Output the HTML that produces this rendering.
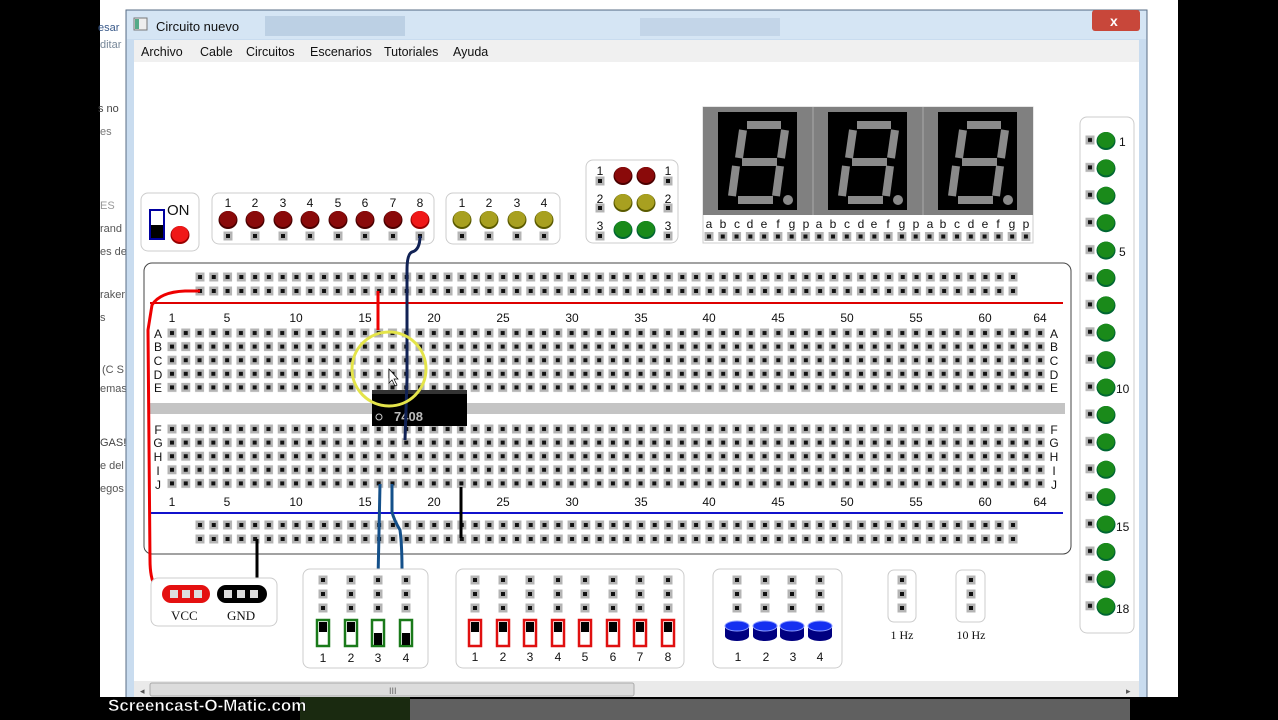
<!DOCTYPE html>
<html><head><meta charset="utf-8"><style>
html,body{margin:0;padding:0;background:#000;}
svg{display:block;font-family:"Liberation Sans",sans-serif;}
</style></head><body>
<svg width="1278" height="720" viewBox="0 0 1278 720" xmlns="http://www.w3.org/2000/svg">
<defs>
<pattern id="hp" width="13.78" height="13.6" patternUnits="userSpaceOnUse"><rect x="2.4" y="2.3" width="9" height="9" fill="#b4b4b4"/><rect x="4.9" y="4.8" width="4" height="4" fill="#111"/></pattern>
<pattern id="hr" width="13.78" height="14" patternUnits="userSpaceOnUse"><rect x="2.4" y="2.5" width="9" height="9" fill="#b4b4b4"/><rect x="4.9" y="5" width="4" height="4" fill="#111"/></pattern>
<pattern id="hl" width="13.78" height="27.4" patternUnits="userSpaceOnUse"><rect x="2.4" y="2.2" width="9" height="9" fill="#b4b4b4"/><rect x="4.9" y="4.7" width="4" height="4" fill="#111"/></pattern>
<g id="o"><rect x="-4.5" y="-4.5" width="9" height="9" fill="#b4b4b4"/><rect x="-2" y="-2" width="4" height="4" fill="#111"/></g>
<g id="lr"><ellipse cx="0" cy="1" rx="9.5" ry="9" fill="#4a0000"/><ellipse cx="0" cy="0" rx="8.5" ry="8" fill="#8a0a0a"/></g>
<g id="lo"><ellipse cx="0" cy="1" rx="9.5" ry="9" fill="#900"/><ellipse cx="0" cy="0" rx="8.5" ry="8" fill="#f01818"/></g>
<g id="ly"><ellipse cx="0" cy="1" rx="9.5" ry="9" fill="#5a5a00"/><ellipse cx="0" cy="0" rx="8.5" ry="8" fill="#a8a020"/></g>
<g id="lg"><ellipse cx="0" cy="1" rx="9.5" ry="9" fill="#063"/><ellipse cx="0" cy="0" rx="8.5" ry="8" fill="#1a8a1a"/></g>
<g id="dg"><rect width="79" height="98" fill="#000"/><g stroke="#8a8a8a" stroke-width="8"><line x1="29" y1="13" x2="63" y2="13"/><line x1="67" y1="18" x2="63" y2="46"/><line x1="62" y1="54" x2="58" y2="84"/><line x1="20" y1="88" x2="55" y2="88"/><line x1="18" y1="54" x2="14" y2="84"/><line x1="25" y1="18" x2="21" y2="46"/><line x1="24" y1="50" x2="59" y2="50"/></g><circle cx="70" cy="88" r="5" fill="#8a8a8a"/></g>
<g id="bb"><ellipse cx="0" cy="8" rx="12" ry="5" fill="#000080"/><rect x="-12" y="-2" width="24" height="10" fill="#000080"/><ellipse cx="0" cy="-2" rx="12" ry="5" fill="#1530f0" stroke="#8fa0ff" stroke-width="1"/></g>
</defs>
<rect x="0" y="0" width="100" height="720" fill="#000"/>
<rect x="100" y="0" width="1078" height="697" fill="#fff"/>
<rect x="1178" y="0" width="100" height="720" fill="#000"/>
<g font-size="11" fill="#3a5a8a"><text x="98" y="31">esar</text><text x="100" y="48" fill="#789">ditar</text><text x="98" y="112" fill="#444">s no</text><text x="100" y="135" fill="#777">es</text><text x="100" y="209" fill="#999">ES</text><text x="100" y="232" fill="#555">rand</text><text x="100" y="255" fill="#555">es de</text><text x="100" y="298" fill="#555">raker</text><text x="100" y="321" fill="#555">s</text><text x="102" y="373" fill="#555">(C S</text><text x="100" y="392" fill="#555">emas</text><text x="100" y="446" fill="#444">GAS!</text><text x="100" y="469" fill="#555">e del</text><text x="100" y="492" fill="#555">egos</text></g>
<rect x="126" y="10" width="1021" height="695" fill="#c9dcef" stroke="#5a6e86"/>
<rect x="127" y="11" width="1019" height="28" fill="#d5e5f4"/>
<rect x="265" y="16" width="140" height="20" fill="#bcd0e4"/>
<rect x="640" y="18" width="140" height="18" fill="#c3d5e8"/>
<rect x="134" y="18" width="13" height="12" fill="#eee" stroke="#777"/><rect x="135" y="19" width="4" height="10" fill="#5a8"/>
<text x="156" y="31" font-size="13" fill="#111">Circuito nuevo</text>
<rect x="1092" y="10" width="48" height="21" rx="3" fill="#c8473a"/><text x="1110" y="26" font-size="14" font-weight="bold" fill="#fff">x</text>
<rect x="134" y="40" width="1005" height="22" fill="#f0f0f0"/>
<g font-size="12.5" fill="#111"><text x="141" y="56">Archivo</text><text x="200" y="56">Cable</text><text x="246" y="56">Circuitos</text><text x="310" y="56">Escenarios</text><text x="384" y="56">Tutoriales</text><text x="453" y="56">Ayuda</text></g>
<rect x="134" y="62" width="1005" height="619" fill="#fff"/>
<rect x="134" y="681" width="1005" height="17" fill="#eaeaea"/>
<rect x="150" y="683" width="484" height="13" rx="2" fill="#dcdcdc" stroke="#aaa"/>
<text x="389" y="694" font-size="9" fill="#666">III</text>
<text x="140" y="694" font-size="9" fill="#555">◂</text><text x="1126" y="694" font-size="9" fill="#555">▸</text>
<rect x="0" y="697" width="1278" height="23" fill="#000"/>
<rect x="300" y="697" width="110" height="23" fill="#1a2a10"/>
<rect x="410" y="699" width="720" height="21" fill="#606060"/>
<text x="108" y="711" font-size="17" font-weight="bold" fill="#fff" stroke="#000" stroke-width="0.5">Screencast-O-Matic.com</text>

<rect x="141" y="193" width="58" height="58" rx="7" fill="#fff" stroke="#ccc"/>
<rect x="150" y="210" width="14" height="29" fill="#fff" stroke="#0000a0" stroke-width="2"/><rect x="151" y="225" width="12" height="13" fill="#000"/>
<text x="167" y="215" font-size="15" fill="#111">ON</text>
<use href="#lo" x="180" y="234"/>
<rect x="212" y="193" width="222" height="51" rx="7" fill="#fff" stroke="#ccc"/>
<g font-size="12" fill="#111" text-anchor="middle"><text x="228" y="207">1</text><text x="255" y="207">2</text><text x="283" y="207">3</text><text x="310" y="207">4</text><text x="338" y="207">5</text><text x="365" y="207">6</text><text x="393" y="207">7</text><text x="420" y="207">8</text></g>
<use href="#lr" x="228" y="219"/><use href="#lr" x="255" y="219"/><use href="#lr" x="283" y="219"/><use href="#lr" x="310" y="219"/><use href="#lr" x="338" y="219"/><use href="#lr" x="365" y="219"/><use href="#lr" x="393" y="219"/><use href="#lo" x="420" y="219"/>
<use href="#o" x="228" y="236"/><use href="#o" x="255" y="236"/><use href="#o" x="283" y="236"/><use href="#o" x="310" y="236"/><use href="#o" x="338" y="236"/><use href="#o" x="365" y="236"/><use href="#o" x="393" y="236"/><use href="#o" x="420" y="236"/>
<rect x="446" y="193" width="114" height="51" rx="7" fill="#fff" stroke="#ccc"/>
<g font-size="12" fill="#111" text-anchor="middle"><text x="462" y="207">1</text><text x="489" y="207">2</text><text x="517" y="207">3</text><text x="544" y="207">4</text></g>
<use href="#ly" x="462" y="219"/><use href="#ly" x="489" y="219"/><use href="#ly" x="517" y="219"/><use href="#ly" x="544" y="219"/>
<use href="#o" x="462" y="236"/><use href="#o" x="489" y="236"/><use href="#o" x="517" y="236"/><use href="#o" x="544" y="236"/>
<rect x="586" y="160" width="92" height="83" rx="7" fill="#fff" stroke="#ccc"/>
<g font-size="12" fill="#111" text-anchor="middle"><text x="600" y="175">1</text><text x="668" y="175">1</text><text x="600" y="203">2</text><text x="668" y="203">2</text><text x="600" y="230">3</text><text x="668" y="230">3</text></g>
<use href="#o" x="600" y="181"/><use href="#o" x="668" y="181"/><use href="#o" x="600" y="208"/><use href="#o" x="668" y="208"/><use href="#o" x="600" y="236"/><use href="#o" x="668" y="236"/>
<use href="#lr" x="623" y="175"/><use href="#lr" x="646" y="175"/><use href="#ly" x="623" y="202"/><use href="#ly" x="646" y="202"/><use href="#lg" x="623" y="229"/><use href="#lg" x="646" y="229"/>
<rect x="703" y="107" width="330" height="136" fill="#fff" stroke="#ccc"/>
<rect x="703" y="107" width="330" height="108" fill="#808080"/>
<line x1="813" y1="107" x2="813" y2="215" stroke="#aaa"/><line x1="923" y1="107" x2="923" y2="215" stroke="#aaa"/>
<use href="#dg" x="718" y="112"/><use href="#dg" x="828" y="112"/><use href="#dg" x="938" y="112"/>
<g font-size="12" fill="#111" text-anchor="middle">
<text x="709" y="228">a</text><text x="723" y="228">b</text><text x="737" y="228">c</text><text x="750" y="228">d</text><text x="764" y="228">e</text><text x="778" y="228">f</text><text x="792" y="228">g</text><text x="806" y="228">p</text>
<text x="819" y="228">a</text><text x="833" y="228">b</text><text x="847" y="228">c</text><text x="861" y="228">d</text><text x="874" y="228">e</text><text x="888" y="228">f</text><text x="902" y="228">g</text><text x="916" y="228">p</text>
<text x="930" y="228">a</text><text x="943" y="228">b</text><text x="957" y="228">c</text><text x="971" y="228">d</text><text x="985" y="228">e</text><text x="998" y="228">f</text><text x="1012" y="228">g</text><text x="1026" y="228">p</text></g>
<g transform="translate(702.1,229.5)"><rect width="330.7" height="14" fill="url(#hr)"/></g>
<rect x="1080" y="117" width="54" height="516" rx="7" fill="#fff" stroke="#ccc"/>
<g transform="translate(1083.1,133.3)"><rect width="13.78" height="493" fill="url(#hl)"/></g>
<g>
<use href="#lg" x="1106" y="140"/><use href="#lg" x="1106" y="167.4"/><use href="#lg" x="1106" y="194.8"/><use href="#lg" x="1106" y="222.2"/><use href="#lg" x="1106" y="249.6"/><use href="#lg" x="1106" y="277"/><use href="#lg" x="1106" y="304.4"/><use href="#lg" x="1106" y="331.8"/><use href="#lg" x="1106" y="359.2"/><use href="#lg" x="1106" y="386.6"/><use href="#lg" x="1106" y="414"/><use href="#lg" x="1106" y="441.4"/><use href="#lg" x="1106" y="468.8"/><use href="#lg" x="1106" y="496.2"/><use href="#lg" x="1106" y="523.6"/><use href="#lg" x="1106" y="551"/><use href="#lg" x="1106" y="578.4"/><use href="#lg" x="1106" y="605.8"/></g>
<g font-size="12" fill="#111"><text x="1119" y="146">1</text><text x="1119" y="256">5</text><text x="1116" y="393">10</text><text x="1116" y="531">15</text><text x="1116" y="613">18</text></g>

<rect x="144" y="263" width="927" height="291" rx="8" fill="#fff" stroke="#444"/>
<line x1="150" y1="303" x2="1063" y2="303" stroke="#d00" stroke-width="2"/>
<line x1="150" y1="513" x2="1063" y2="513" stroke="#11c" stroke-width="2"/>
<rect x="150" y="403" width="915" height="11" fill="#c4c4c4"/>
<g transform="translate(193.1,270)"><rect width="826.8" height="28" fill="url(#hr)"/></g>
<g transform="translate(193.1,518)"><rect width="826.8" height="28" fill="url(#hr)"/></g>
<g transform="translate(165.1,326.2)"><rect width="882" height="68" fill="url(#hp)"/></g>
<g transform="translate(165.1,422.2)"><rect width="882" height="68" fill="url(#hp)"/></g>
<g font-size="12" fill="#111" text-anchor="middle">
<text x="172" y="322">1</text><text x="227" y="322">5</text><text x="296" y="322">10</text><text x="365" y="322">15</text><text x="434" y="322">20</text><text x="503" y="322">25</text><text x="572" y="322">30</text><text x="641" y="322">35</text><text x="709" y="322">40</text><text x="778" y="322">45</text><text x="847" y="322">50</text><text x="916" y="322">55</text><text x="985" y="322">60</text><text x="1040" y="322">64</text>
<text x="172" y="506">1</text><text x="227" y="506">5</text><text x="296" y="506">10</text><text x="365" y="506">15</text><text x="434" y="506">20</text><text x="503" y="506">25</text><text x="572" y="506">30</text><text x="641" y="506">35</text><text x="709" y="506">40</text><text x="778" y="506">45</text><text x="847" y="506">50</text><text x="916" y="506">55</text><text x="985" y="506">60</text><text x="1040" y="506">64</text>
<text x="158" y="338">A</text><text x="158" y="351">B</text><text x="158" y="365">C</text><text x="158" y="379">D</text><text x="158" y="392">E</text>
<text x="1054" y="338">A</text><text x="1054" y="351">B</text><text x="1054" y="365">C</text><text x="1054" y="379">D</text><text x="1054" y="392">E</text>
<text x="158" y="434">F</text><text x="158" y="447">G</text><text x="158" y="461">H</text><text x="158" y="475">I</text><text x="158" y="489">J</text>
<text x="1054" y="434">F</text><text x="1054" y="447">G</text><text x="1054" y="461">H</text><text x="1054" y="475">I</text><text x="1054" y="489">J</text></g>
<rect x="372" y="390" width="95" height="36" fill="#000"/>
<rect x="372" y="390" width="95" height="4" fill="#333"/>
<circle cx="379" cy="417" r="3" fill="none" stroke="#ccc"/>
<text x="394" y="421" font-size="13" font-weight="bold" fill="#bbb">7408</text>
<g fill="none" stroke-width="3">
<path d="M200 291 L185 291 Q160 292 152 305 L148 330 L150 560 Q150 595 170 596" stroke="#e00"/>
<path d="M378 291 L378 330" stroke="#e00"/>
<path d="M420 236 Q420 250 412 252 Q407 254 407 270 L407 380 L405 440" stroke="#125"/>
<path d="M380 484 L378 580" stroke="#14508a"/>
<path d="M392 484 L392 512 Q394 520 400 530 Q402 545 402 570 Q403 578 407 580" stroke="#14508a"/>
<path d="M461 487 L461 538" stroke="#000"/>
<path d="M257 539 L257 594" stroke="#000"/>
</g>
<circle cx="389" cy="369" r="37" fill="none" stroke="#e4e44a" stroke-width="3"/>
<path d="M389 369 l0 14 l3 -3 l3 6 l2 -1 l-3 -6 l4 0 z" fill="#fff" stroke="#000" stroke-width="0.7"/>
<rect x="151" y="578" width="126" height="48" rx="7" fill="#fff" stroke="#ccc"/>
<rect x="162" y="585" width="48" height="18" rx="9" fill="#e41010"/>
<rect x="217" y="585" width="50" height="18" rx="9" fill="#000"/>
<g fill="#ddd"><rect x="170" y="590" width="8" height="8"/><rect x="182" y="590" width="8" height="8"/><rect x="194" y="590" width="8" height="8"/><rect x="224" y="590" width="8" height="8"/><rect x="237" y="590" width="8" height="8"/><rect x="250" y="590" width="8" height="8"/></g>
<g font-family="Liberation Serif,serif" font-size="13" fill="#111"><text x="171" y="620">VCC</text><text x="227" y="620">GND</text></g>
<rect x="303" y="569" width="125" height="99" rx="7" fill="#fff" stroke="#ccc"/>
<g><use href="#o" x="323" y="580"/><use href="#o" x="351" y="580"/><use href="#o" x="378" y="580"/><use href="#o" x="406" y="580"/><use href="#o" x="323" y="594"/><use href="#o" x="351" y="594"/><use href="#o" x="378" y="594"/><use href="#o" x="406" y="594"/><use href="#o" x="323" y="608"/><use href="#o" x="351" y="608"/><use href="#o" x="378" y="608"/><use href="#o" x="406" y="608"/></g>
<g stroke="#1a7a1a" stroke-width="2.5" fill="#fff"><rect x="317" y="620" width="12" height="26"/><rect x="345" y="620" width="12" height="26"/><rect x="372" y="620" width="12" height="26"/><rect x="400" y="620" width="12" height="26"/></g>
<g fill="#000"><rect x="319" y="622" width="8" height="10"/><rect x="347" y="622" width="8" height="10"/><rect x="374" y="633" width="8" height="12"/><rect x="402" y="633" width="8" height="12"/></g>
<g font-size="12" fill="#111" text-anchor="middle"><text x="323" y="662">1</text><text x="351" y="662">2</text><text x="378" y="662">3</text><text x="406" y="662">4</text></g>
<rect x="456" y="569" width="228" height="99" rx="7" fill="#fff" stroke="#ccc"/>
<g>
<use href="#o" x="475" y="580"/><use href="#o" x="503" y="580"/><use href="#o" x="530" y="580"/><use href="#o" x="558" y="580"/><use href="#o" x="585" y="580"/><use href="#o" x="613" y="580"/><use href="#o" x="640" y="580"/><use href="#o" x="668" y="580"/>
<use href="#o" x="475" y="594"/><use href="#o" x="503" y="594"/><use href="#o" x="530" y="594"/><use href="#o" x="558" y="594"/><use href="#o" x="585" y="594"/><use href="#o" x="613" y="594"/><use href="#o" x="640" y="594"/><use href="#o" x="668" y="594"/>
<use href="#o" x="475" y="608"/><use href="#o" x="503" y="608"/><use href="#o" x="530" y="608"/><use href="#o" x="558" y="608"/><use href="#o" x="585" y="608"/><use href="#o" x="613" y="608"/><use href="#o" x="640" y="608"/><use href="#o" x="668" y="608"/></g>
<g stroke="#e01010" stroke-width="2.5" fill="#fff"><rect x="469" y="620" width="12" height="26"/><rect x="497" y="620" width="12" height="26"/><rect x="524" y="620" width="12" height="26"/><rect x="552" y="620" width="12" height="26"/><rect x="579" y="620" width="12" height="26"/><rect x="607" y="620" width="12" height="26"/><rect x="634" y="620" width="12" height="26"/><rect x="662" y="620" width="12" height="26"/></g>
<g fill="#000"><rect x="471" y="622" width="8" height="10"/><rect x="499" y="622" width="8" height="10"/><rect x="526" y="622" width="8" height="10"/><rect x="554" y="622" width="8" height="10"/><rect x="581" y="622" width="8" height="10"/><rect x="609" y="622" width="8" height="10"/><rect x="636" y="622" width="8" height="10"/><rect x="664" y="622" width="8" height="10"/></g>
<g font-size="12" fill="#111" text-anchor="middle"><text x="475" y="661">1</text><text x="503" y="661">2</text><text x="530" y="661">3</text><text x="558" y="661">4</text><text x="585" y="661">5</text><text x="613" y="661">6</text><text x="640" y="661">7</text><text x="668" y="661">8</text></g>
<rect x="713" y="569" width="129" height="99" rx="7" fill="#fff" stroke="#ccc"/>
<g><use href="#o" x="737" y="580"/><use href="#o" x="765" y="580"/><use href="#o" x="792" y="580"/><use href="#o" x="820" y="580"/><use href="#o" x="737" y="594"/><use href="#o" x="765" y="594"/><use href="#o" x="792" y="594"/><use href="#o" x="820" y="594"/><use href="#o" x="737" y="608"/><use href="#o" x="765" y="608"/><use href="#o" x="792" y="608"/><use href="#o" x="820" y="608"/></g>
<use href="#bb" x="737" y="628"/><use href="#bb" x="765" y="628"/><use href="#bb" x="792" y="628"/><use href="#bb" x="820" y="628"/>
<g font-size="12" fill="#111" text-anchor="middle"><text x="738" y="661">1</text><text x="766" y="661">2</text><text x="793" y="661">3</text><text x="820" y="661">4</text></g>
<rect x="888" y="570" width="28" height="52" rx="6" fill="#fff" stroke="#ccc"/>
<rect x="956" y="570" width="29" height="52" rx="6" fill="#fff" stroke="#ccc"/>
<use href="#o" x="902" y="580"/><use href="#o" x="902" y="594"/><use href="#o" x="902" y="608"/>
<use href="#o" x="971" y="580"/><use href="#o" x="971" y="594"/><use href="#o" x="971" y="608"/>
<g font-family="Liberation Serif,serif" font-size="12" fill="#111" text-anchor="middle"><text x="902" y="639">1 Hz</text><text x="971" y="639">10 Hz</text></g>
</svg>
</body></html>
